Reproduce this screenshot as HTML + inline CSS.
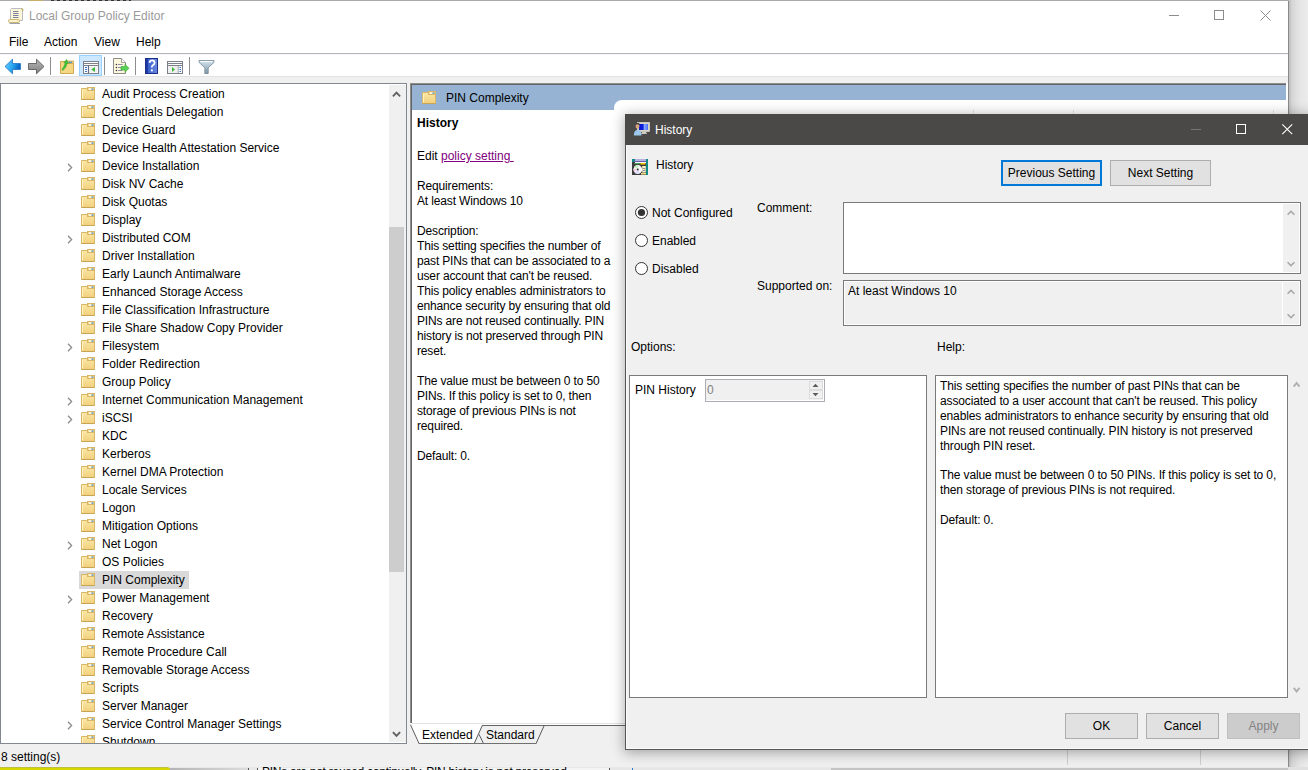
<!DOCTYPE html>
<html><head><meta charset="utf-8">
<style>
*{box-sizing:border-box;margin:0;padding:0}
html,body{width:1308px;height:770px;overflow:hidden;background:#f0f0f0;font-family:"Liberation Sans",sans-serif;font-size:12px;line-height:15px;color:#000}
.a{position:absolute}
.t{position:absolute;white-space:pre;font-size:12px;line-height:15px}
svg{position:absolute;overflow:visible}
.btn{position:absolute;background:#e1e1e1;border:1px solid #adadad;text-align:center;line-height:23px}
.chv{stroke:#606060;stroke-width:1.9;fill:none}
.chl{stroke:#a6a6a6;stroke-width:1.6;fill:none}
</style></head><body>
<svg width="0" height="0" style="position:absolute">
<defs>
<symbol id="fold" viewBox="0 0 14 13">
<linearGradient id="fg" x1="0" y1="0" x2="0" y2="1"><stop offset="0" stop-color="#fbe7a6"/><stop offset="1" stop-color="#f1d07c"/></linearGradient>
<path d="M0.5 1.5H6.2L7 3.5H13.5V12.5H0.5Z" fill="url(#fg)" stroke="#d9b566"/>
<rect x="6.5" y="0.5" width="7" height="3" fill="#f5dc94" stroke="#d9b566"/>
<rect x="8" y="1.5" width="2.5" height="1.2" fill="#fff"/><rect x="10.5" y="1.5" width="2" height="1.2" fill="#3b8de4"/>
<path d="M1.5 2.5V11.5" stroke="#fff3c2"/>
<path d="M0.5 12.5H13.5" stroke="#c9a455"/>
</symbol>
<symbol id="chev" viewBox="0 0 6 9"><path d="M1 0.8L4.6 4.5L1 8.2" stroke="#8c8c8c" stroke-width="1.3" fill="none"/></symbol>
</defs></svg>

<!-- behind strip top -->
<div class="a" style="left:0;top:0;width:1308px;height:1px;background:#a9a9a9"></div>
<div class="a" style="left:29px;top:0;width:14px;height:1px;background:#c9ad6a"></div>
<div class="a" style="left:51px;top:0;width:80px;height:1px;background:repeating-linear-gradient(to right,#333 0 3px,#999 3px 6px)"></div>

<!-- right shadow of main window -->
<div class="a" style="left:1288px;top:0;width:20px;height:770px;background:linear-gradient(to right,#b4b4b4,#d6d6d6 4px,#e6e6e6 12px,#ececec 20px)"></div>

<!-- main window -->
<div class="a" style="left:0;top:1px;width:1289px;height:766px;background:#fff;border-right:1px solid #8a8a8a"></div>

<!-- title bar -->
<div class="t" style="left:29px;top:9px;color:#9a9a9a">Local Group Policy Editor</div>
<div class="a" style="left:1169px;top:15px;width:10px;height:1px;background:#8c8c8c"></div>
<div class="a" style="left:1214px;top:10px;width:10px;height:10px;border:1px solid #8c8c8c"></div>
<svg style="left:1260px;top:10px" width="11" height="11"><path d="M0.5 0.5L10.5 10.5M10.5 0.5L0.5 10.5" stroke="#8c8c8c" stroke-width="1"/></svg>

<!-- menu -->
<div class="t" style="left:9px;top:35px">File</div>
<div class="t" style="left:44px;top:35px">Action</div>
<div class="t" style="left:94px;top:35px">View</div>
<div class="t" style="left:136px;top:35px">Help</div>
<div class="a" style="left:0;top:53px;width:1288px;height:1px;background:#b5b5b5"></div>
<div class="a" style="left:0;top:54px;width:1288px;height:1px;background:#f5f8fc"></div>

<!-- title icon -->
<svg style="left:7px;top:7px" width="17" height="17" viewBox="0 0 17 17">
<path d="M4.5 1.5H14.5L15.5 2.5V13.5H3.5V2.5Z" fill="#fcf6d8" stroke="#b9bcc8"/>
<path d="M14 1.5Q16.5 2 15.6 4" stroke="#b9a153" stroke-width="1.2" fill="none"/>
<path d="M6 4.5H11.5M6 6.5H11.5M6 8.5H11.5M6 10.5H11.5" stroke="#7c7f9c" stroke-width="1"/>
<rect x="1.5" y="12.5" width="11" height="3" rx="1.2" fill="#f6ebbb" stroke="#cdb673"/>
<path d="M3 14H10" stroke="#fffbe6"/>
<path d="M2.5 16.5H13" stroke="#9da0ae"/>
</svg>

<!-- toolbar icons -->
<svg style="left:0;top:54px" width="230" height="22" viewBox="0 54 230 22">
<defs>
<linearGradient id="gb" x1="0" y1="0" x2="1" y2="0.3"><stop offset="0" stop-color="#6ad2ff"/><stop offset="0.55" stop-color="#2aa8f2"/><stop offset="1" stop-color="#0565c4"/></linearGradient>
<linearGradient id="gg" x1="0" y1="0" x2="0" y2="1"><stop offset="0" stop-color="#b8b8b8"/><stop offset="1" stop-color="#7e7e7e"/></linearGradient>
<linearGradient id="gq" x1="0" y1="0" x2="1" y2="0"><stop offset="0" stop-color="#2f56c8"/><stop offset="1" stop-color="#6b8ae0"/></linearGradient>
<linearGradient id="gf" x1="0" y1="0" x2="0" y2="1"><stop offset="0" stop-color="#d8e6ef"/><stop offset="1" stop-color="#7d96a8"/></linearGradient>
</defs>
<path d="M5 66.5L12.5 59.2V63.5H20.5V69.5H12.5V73.8Z" fill="url(#gb)" stroke="#2c7cc6" stroke-width="0.9" stroke-linejoin="round"/>
<path d="M44 66.5L36.5 59.2V63.5H28.5V69.5H36.5V73.8Z" fill="url(#gg)" stroke="#5e5e5e" stroke-width="0.9" stroke-linejoin="round"/>
<rect x="50" y="57" width="1" height="18" fill="#8d8d8d"/>
<!-- folder up -->
<path d="M60.5 61.5H66L67 63.5H73.5V73.5H60.5Z" fill="#f5d784" stroke="#d0a850"/>
<rect x="66.5" y="61" width="7" height="2.5" fill="#f1d27c" stroke="#d0a850" stroke-width="0.8"/>
<rect x="69" y="61.7" width="3" height="1.2" fill="#3d8fe0"/>
<path d="M62 69.5Q64.5 66 65.5 62.5L63.8 63L66.5 59.5L68.8 63.5L67.2 63.2Q66.5 67.5 62.8 70.5Z" fill="#3fc63a" stroke="#2a9a26" stroke-width="0.5"/>
<!-- highlighted button -->
<rect x="79.5" y="55.5" width="22" height="20" fill="#cce8ff" stroke="#99d1ff"/>
<rect x="83.5" y="61.5" width="15" height="12" fill="#fff" stroke="#7b808b"/>
<path d="M84 63.5H98M84 65.5H98" stroke="#7b808b" stroke-width="1"/>
<rect x="92" y="62" width="1" height="1" fill="#fff"/><rect x="95" y="62" width="1" height="1" fill="#fff"/>
<path d="M88.5 66V73" stroke="#5d6a80" stroke-width="1.2"/>
<path d="M85 67.5H87M85 69.5H87M85 71.5H87" stroke="#3e74c4" stroke-width="1"/>
<rect x="89.5" y="66.5" width="8" height="6" fill="#f0f0f0"/>
<path d="M95 67L91.2 69.5L95 72Z" fill="#3cb83a"/>
<rect x="104" y="57" width="1" height="18" fill="#8d8d8d"/>
<!-- export list -->
<path d="M113.5 58.5H121.5L125.5 62.5V73.5H113.5Z" fill="#fdf7dc" stroke="#8c8c8c"/>
<path d="M121.5 58.5V62.5H125.5" fill="#fff" stroke="#8c8c8c" stroke-width="0.8"/>
<circle cx="116.4" cy="64.5" r="0.8" fill="#333"/><circle cx="116.4" cy="67.5" r="0.8" fill="#333"/><circle cx="116.4" cy="70.5" r="0.8" fill="#333"/>
<path d="M118 64.5H122.5M118 67.5H122.5M118 70.5H122.5" stroke="#8080a8" stroke-width="0.9"/>
<path d="M121 66.5H125V64.2L129 68.3L125 72.3V70H121Z" fill="#5ad255" stroke="#3aa536" stroke-width="0.6"/>
<rect x="135" y="57" width="1" height="18" fill="#8d8d8d"/>
<!-- help -->
<rect x="145" y="58" width="13" height="16" fill="url(#gq)"/>
<rect x="145" y="58" width="3" height="16" fill="#1e3ca4"/>
<rect x="145.5" y="58.5" width="12" height="15" fill="none" stroke="#1b2f8a" stroke-width="1"/>
<path d="M149.5 62.8Q149.8 60.3 152 60.3Q154.6 60.3 154.6 62.8Q154.6 64.4 152.8 65.3Q151.8 65.9 151.8 67.6" stroke="#fff" stroke-width="1.7" fill="none"/>
<rect x="150.9" y="69.4" width="1.9" height="1.9" fill="#fff"/>
<!-- action pane -->
<rect x="167.5" y="61.5" width="15" height="12" fill="#fff" stroke="#7b808b"/>
<path d="M168 63.5H182M168 65.5H182" stroke="#7b808b" stroke-width="1"/>
<path d="M178 66V73" stroke="#7b808b" stroke-width="1"/>
<rect x="168" y="66" width="9.5" height="7" fill="#efefef"/>
<path d="M179.5 67.5H181M179.5 69.5H181M179.5 71.5H181" stroke="#3e74c4" stroke-width="1"/>
<path d="M172 67L175 69.5L172 72Z" fill="#3cb83a"/>
<rect x="189" y="57" width="1" height="18" fill="#8d8d8d"/>
<!-- filter -->
<path d="M199 60.5H214V62.3L208.2 67.8V73.5H204.8V67.8L199 62.3Z" fill="url(#gf)" stroke="#6f8796" stroke-width="0.8" stroke-linejoin="round"/>
<path d="M200.5 61.5H212.5" stroke="#fff" stroke-width="0.9"/>
</svg>


<!-- toolbar strip -->
<div class="a" style="left:0;top:76px;width:1288px;height:7px;background:#f0f0f0;border-top:1px solid #e2e2e2"></div>

<!-- left panel -->
<div class="a" style="left:0;top:83px;width:407px;height:661px;border:1px solid #828790;background:#fff;overflow:hidden">
<svg style="left:80px;top:3px" width="14" height="13"><use href="#fold"/></svg>
<div class="t" style="left:101px;top:3px">Audit Process Creation</div>
<svg style="left:80px;top:21px" width="14" height="13"><use href="#fold"/></svg>
<div class="t" style="left:101px;top:21px">Credentials Delegation</div>
<svg style="left:80px;top:39px" width="14" height="13"><use href="#fold"/></svg>
<div class="t" style="left:101px;top:39px">Device Guard</div>
<svg style="left:80px;top:57px" width="14" height="13"><use href="#fold"/></svg>
<div class="t" style="left:101px;top:57px">Device Health Attestation Service</div>
<svg style="left:66px;top:79px" width="6" height="9"><use href="#chev"/></svg>
<svg style="left:80px;top:75px" width="14" height="13"><use href="#fold"/></svg>
<div class="t" style="left:101px;top:75px">Device Installation</div>
<svg style="left:80px;top:93px" width="14" height="13"><use href="#fold"/></svg>
<div class="t" style="left:101px;top:93px">Disk NV Cache</div>
<svg style="left:80px;top:111px" width="14" height="13"><use href="#fold"/></svg>
<div class="t" style="left:101px;top:111px">Disk Quotas</div>
<svg style="left:80px;top:129px" width="14" height="13"><use href="#fold"/></svg>
<div class="t" style="left:101px;top:129px">Display</div>
<svg style="left:66px;top:151px" width="6" height="9"><use href="#chev"/></svg>
<svg style="left:80px;top:147px" width="14" height="13"><use href="#fold"/></svg>
<div class="t" style="left:101px;top:147px">Distributed COM</div>
<svg style="left:80px;top:165px" width="14" height="13"><use href="#fold"/></svg>
<div class="t" style="left:101px;top:165px">Driver Installation</div>
<svg style="left:80px;top:183px" width="14" height="13"><use href="#fold"/></svg>
<div class="t" style="left:101px;top:183px">Early Launch Antimalware</div>
<svg style="left:80px;top:201px" width="14" height="13"><use href="#fold"/></svg>
<div class="t" style="left:101px;top:201px">Enhanced Storage Access</div>
<svg style="left:80px;top:219px" width="14" height="13"><use href="#fold"/></svg>
<div class="t" style="left:101px;top:219px">File Classification Infrastructure</div>
<svg style="left:80px;top:237px" width="14" height="13"><use href="#fold"/></svg>
<div class="t" style="left:101px;top:237px">File Share Shadow Copy Provider</div>
<svg style="left:66px;top:259px" width="6" height="9"><use href="#chev"/></svg>
<svg style="left:80px;top:255px" width="14" height="13"><use href="#fold"/></svg>
<div class="t" style="left:101px;top:255px">Filesystem</div>
<svg style="left:80px;top:273px" width="14" height="13"><use href="#fold"/></svg>
<div class="t" style="left:101px;top:273px">Folder Redirection</div>
<svg style="left:80px;top:291px" width="14" height="13"><use href="#fold"/></svg>
<div class="t" style="left:101px;top:291px">Group Policy</div>
<svg style="left:66px;top:313px" width="6" height="9"><use href="#chev"/></svg>
<svg style="left:80px;top:309px" width="14" height="13"><use href="#fold"/></svg>
<div class="t" style="left:101px;top:309px">Internet Communication Management</div>
<svg style="left:66px;top:331px" width="6" height="9"><use href="#chev"/></svg>
<svg style="left:80px;top:327px" width="14" height="13"><use href="#fold"/></svg>
<div class="t" style="left:101px;top:327px">iSCSI</div>
<svg style="left:80px;top:345px" width="14" height="13"><use href="#fold"/></svg>
<div class="t" style="left:101px;top:345px">KDC</div>
<svg style="left:80px;top:363px" width="14" height="13"><use href="#fold"/></svg>
<div class="t" style="left:101px;top:363px">Kerberos</div>
<svg style="left:80px;top:381px" width="14" height="13"><use href="#fold"/></svg>
<div class="t" style="left:101px;top:381px">Kernel DMA Protection</div>
<svg style="left:80px;top:399px" width="14" height="13"><use href="#fold"/></svg>
<div class="t" style="left:101px;top:399px">Locale Services</div>
<svg style="left:80px;top:417px" width="14" height="13"><use href="#fold"/></svg>
<div class="t" style="left:101px;top:417px">Logon</div>
<svg style="left:80px;top:435px" width="14" height="13"><use href="#fold"/></svg>
<div class="t" style="left:101px;top:435px">Mitigation Options</div>
<svg style="left:66px;top:457px" width="6" height="9"><use href="#chev"/></svg>
<svg style="left:80px;top:453px" width="14" height="13"><use href="#fold"/></svg>
<div class="t" style="left:101px;top:453px">Net Logon</div>
<svg style="left:80px;top:471px" width="14" height="13"><use href="#fold"/></svg>
<div class="t" style="left:101px;top:471px">OS Policies</div>
<div class="a" style="left:78px;top:487px;width:110px;height:18px;background:#d9d9d9"></div>
<svg style="left:80px;top:489px" width="14" height="13"><use href="#fold"/></svg>
<div class="t" style="left:101px;top:489px">PIN Complexity</div>
<svg style="left:66px;top:511px" width="6" height="9"><use href="#chev"/></svg>
<svg style="left:80px;top:507px" width="14" height="13"><use href="#fold"/></svg>
<div class="t" style="left:101px;top:507px">Power Management</div>
<svg style="left:80px;top:525px" width="14" height="13"><use href="#fold"/></svg>
<div class="t" style="left:101px;top:525px">Recovery</div>
<svg style="left:80px;top:543px" width="14" height="13"><use href="#fold"/></svg>
<div class="t" style="left:101px;top:543px">Remote Assistance</div>
<svg style="left:80px;top:561px" width="14" height="13"><use href="#fold"/></svg>
<div class="t" style="left:101px;top:561px">Remote Procedure Call</div>
<svg style="left:80px;top:579px" width="14" height="13"><use href="#fold"/></svg>
<div class="t" style="left:101px;top:579px">Removable Storage Access</div>
<svg style="left:80px;top:597px" width="14" height="13"><use href="#fold"/></svg>
<div class="t" style="left:101px;top:597px">Scripts</div>
<svg style="left:80px;top:615px" width="14" height="13"><use href="#fold"/></svg>
<div class="t" style="left:101px;top:615px">Server Manager</div>
<svg style="left:66px;top:637px" width="6" height="9"><use href="#chev"/></svg>
<svg style="left:80px;top:633px" width="14" height="13"><use href="#fold"/></svg>
<div class="t" style="left:101px;top:633px">Service Control Manager Settings</div>
<svg style="left:80px;top:651px" width="14" height="13"><use href="#fold"/></svg>
<div class="t" style="left:101px;top:651px">Shutdown</div>
<div class="a" style="left:388px;top:1px;width:17px;height:657px;background:#f0f0f0"></div>
<div class="a" style="left:388px;top:143px;width:15px;height:345px;background:#cdcdcd"></div>
<svg style="left:391px;top:7px" width="9" height="6"><path d="M0.9 5.3L4.5 1.6L8.1 5.3" class="chv"/></svg>
<svg style="left:391px;top:647px" width="9" height="6"><path d="M0.9 1.2L4.5 4.9L8.1 1.2" class="chv"/></svg>
</div>
<div class="a" style="left:407px;top:83px;width:3px;height:661px;background:#f0f0f0"></div>

<!-- right pane -->
<div class="a" style="left:410px;top:83px;width:876px;height:640px;background:#fff;border-left:1px solid #8e8e8e;border-top:1px solid #8e8e8e;box-shadow:inset 1px 1px 0 #646464"></div>
<div class="a" style="left:412px;top:85px;width:874px;height:25px;background:#96b3d3"></div>
<svg style="left:422px;top:91px" width="14" height="13"><use href="#fold"/></svg>
<div class="t" style="left:446px;top:91px">PIN Complexity</div>
<div class="t" style="left:417px;top:116px;font-weight:bold">History</div>
<div class="t" style="left:417px;top:149px">Edit <span style="color:#800080;text-decoration:underline">policy setting </span></div>
<div class="t" style="left:417px;top:179px;letter-spacing:-0.15px">Requirements:
At least Windows 10

Description:
This setting specifies the number of
past PINs that can be associated to a
user account that can't be reused.
This policy enables administrators to
enhance security by ensuring that old
PINs are not reused continually. PIN
history is not preserved through PIN
reset.

The value must be between 0 to 50
PINs. If this policy is set to 0, then
storage of previous PINs is not
required.

Default: 0.</div>
<div class="a" style="left:412px;top:723px;width:874px;height:1px;background:#e3e3e3"></div>
<svg style="left:410px;top:724px" width="876" height="21">
<rect x="0" y="0" width="876" height="20" fill="#f0f0f0"/>
<rect x="2" y="0" width="874" height="1" fill="#fff"/>
<path d="M0 0.5L8.5 19.5H64.3L72.3 0.5Z" fill="#fff"/>
<path d="M0.5 0.8L8.8 19" stroke="#5a5a5a" stroke-width="1" fill="none"/>
<path d="M72 1.5H876" stroke="#646464" stroke-width="1"/>
<path d="M72.3 1.5L64.3 19.3M134.2 1.5L126.2 19.3M69 10.3L73.4 19.3" stroke="#5a5a5a" stroke-width="1" fill="none"/>
<path d="M8.5 19.5H126.5" stroke="#707070" stroke-width="1"/>
<path d="M2 20.5H876" stroke="#d4d4d4" stroke-width="1"/>
</svg>
<div class="t" style="left:422px;top:728px">Extended</div>
<div class="t" style="left:486px;top:728px">Standard</div>


<!-- status bar -->
<div class="a" style="left:0;top:744px;width:1288px;height:23px;background:#f0f0f0"></div>
<div class="t" style="left:1px;top:750px">8 setting(s)</div>
<div class="a" style="left:1067px;top:746px;width:1px;height:19px;background:#cfcfcf"></div>
<div class="a" style="left:1200px;top:746px;width:1px;height:19px;background:#cfcfcf"></div>

<!-- bottom strip -->
<div class="a" style="left:0;top:767px;width:1308px;height:3px;background:#c4c4c4;overflow:hidden">
<div class="a" style="left:0;top:0;width:1308px;height:1px;background:#e8e8e8"></div>
<div class="a" style="left:0;top:0;width:170px;height:3px;background:#d6d600;border-top:1px solid #c0c040;border-radius:0 3px 0 0"></div>
<div class="a" style="left:170px;top:1px;width:78px;height:2px;background:linear-gradient(to right,#b4b4b4,#dcdcdc)"></div>
<div class="a" style="left:248px;top:1px;width:1px;height:2px;background:#555"></div>
<div class="a" style="left:249px;top:1px;width:8px;height:2px;background:#e8e8e8"></div>
<div class="a" style="left:257px;top:1px;width:1px;height:2px;background:#555"></div>
<div class="a" style="left:258px;top:1px;width:351px;height:2px;background:#f4f4f4"></div>
<div class="a" style="left:609px;top:1px;width:1px;height:2px;background:#555"></div>
<div class="a" style="left:610px;top:1px;width:221px;height:2px;background:#e6e6e6"></div>
<div class="a" style="left:632px;top:1px;width:1px;height:2px;background:#2a7ad0"></div>
<div class="a" style="left:1288px;top:0;width:20px;height:3px;background:#e0e0e0"></div>
<div class="t" style="left:262px;top:-2px;letter-spacing:-0.25px">PINs are not reused continually. PIN history is not preserved</div>
</div>

<!-- dialog shadow -->
<div class="a" style="left:614px;top:100px;width:672px;height:30px;border-radius:8px 0 0 0;background:#fff"></div>
<div class="a" style="left:625px;top:114px;width:690px;height:636px;box-shadow:0 2px 12px 1px rgba(0,0,0,0.32)"></div>
<div class="a" style="left:973px;top:110px;width:1px;height:4px;background:#cfcfcf"></div>
<div class="a" style="left:1073px;top:110px;width:1px;height:4px;background:#cfcfcf"></div>
<div class="a" style="left:1273px;top:110px;width:1px;height:4px;background:#cfcfcf"></div>
<!-- dialog -->
<div class="a" style="left:625px;top:114px;width:690px;height:636px;background:#f0f0f0;border:1px solid #555;box-shadow:inset 1px -1px 0 #fbfbfb"></div>
<div class="a" style="left:625px;top:114px;width:690px;height:31px;background:#4a4947"></div>
<div class="t" style="left:655px;top:123px;color:#fff">History</div>
<div class="a" style="left:1191px;top:129px;width:10px;height:1px;background:#767574"></div>
<div class="a" style="left:1236px;top:124px;width:10px;height:10px;border:1px solid #fff"></div>
<svg style="left:1282px;top:124px" width="11" height="11"><path d="M0.3 0.3L10.2 10.2M10.2 0.3L0.3 10.2" stroke="#fff" stroke-width="1.1"/></svg>

<svg style="left:633px;top:120px" width="18" height="18" viewBox="0 0 18 18">
<defs><linearGradient id="scr" x1="0" y1="0" x2="1" y2="0"><stop offset="0" stop-color="#0a10c8"/><stop offset="0.45" stop-color="#0a20e0"/><stop offset="0.6" stop-color="#8aa8ff"/><stop offset="1" stop-color="#4868ff"/></linearGradient></defs>
<rect x="4.5" y="2.5" width="12" height="9" fill="#d8d4c8" stroke="#f0ece0" stroke-width="0.6"/>
<rect x="6" y="4" width="9" height="6" fill="url(#scr)"/>
<path d="M9 12H13L14 14H8Z" fill="#cfcbc0"/>
<ellipse cx="4.5" cy="6" rx="2" ry="2.6" fill="#d9a77a"/>
<path d="M2.5 4.5Q4.5 2.5 6.5 4.5" stroke="#444" stroke-width="1.2" fill="none"/>
<path d="M0.8 15.5Q1 10 4.5 10Q8.5 10 8.5 15.5Z" fill="#9cc8ec"/>
</svg>
<svg style="left:631px;top:158px" width="18" height="18" viewBox="0 0 18 18">
<rect x="1" y="1" width="16" height="16" fill="#3c3c3c"/>
<rect x="1" y="1" width="3" height="3" fill="#0f8a84"/><rect x="15" y="1" width="2" height="16" fill="#0f8a84"/>
<rect x="4" y="1" width="11" height="2" fill="#b8b2e0"/>
<rect x="3" y="3" width="12" height="1" fill="#6a62a8"/>
<rect x="4" y="4" width="11" height="1" fill="#f4f4ff"/>
<rect x="3.5" y="5" width="6" height="1.2" fill="#4a9a5a"/><rect x="9.5" y="5" width="5" height="1.6" fill="#f7c400"/>
<circle cx="6.8" cy="11.5" r="4.4" fill="#f6f6f6"/>
<path d="M6.8 11.5L3.2 8.8A4.4 4.4 0 0 1 6.8 7.1Z" fill="#c4f2bc"/><path d="M6.8 11.5L4 15A4.4 4.4 0 0 0 8.5 15.6Z" fill="#dcdcff"/><path d="M6.8 11.5L2.6 10.8A4.4 4.4 0 0 0 3.2 13.8Z" fill="#f4c8e6"/>
<circle cx="6.8" cy="11.5" r="1" fill="#333"/>
<rect x="11.2" y="8" width="3.6" height="6.5" fill="#fdf3c0"/>
<path d="M11.8 10.5H14.2M11.8 12.5H14.2" stroke="#7a7aa0" stroke-width="0.9"/>
<rect x="10" y="15" width="5" height="1.5" fill="#f3dd8a"/>
</svg>
<div class="t" style="left:656px;top:158px">History</div>
<div class="btn" style="left:1001px;top:160px;width:101px;height:26px;border:2px solid #0078d7;line-height:22px">Previous Setting</div>
<div class="btn" style="left:1110px;top:160px;width:101px;height:26px;line-height:24px">Next Setting</div>

<svg style="left:635px;top:206px" width="13" height="13"><circle cx="6.5" cy="6.5" r="6" fill="#fff" stroke="#333"/><circle cx="6.5" cy="6.5" r="3.6" fill="#333"/></svg>
<svg style="left:635px;top:234px" width="13" height="13"><circle cx="6.5" cy="6.5" r="6" fill="#fff" stroke="#333"/></svg>
<svg style="left:635px;top:262px" width="13" height="13"><circle cx="6.5" cy="6.5" r="6" fill="#fff" stroke="#333"/></svg>
<div class="t" style="left:652px;top:206px">Not Configured</div>
<div class="t" style="left:652px;top:234px">Enabled</div>
<div class="t" style="left:652px;top:262px">Disabled</div>

<div class="t" style="left:757px;top:201px">Comment:</div>
<div class="a" style="left:843px;top:202px;width:458px;height:72px;background:#fff;border:1px solid #7a7a7a"></div>
<div class="a" style="left:1283px;top:204px;width:16px;height:68px;background:#f0f0f0"></div>
<svg style="left:1287px;top:210px" width="8" height="6"><path d="M0.6 4.8L4 1.3L7.4 4.8" class="chl"/></svg>
<svg style="left:1287px;top:261px" width="8" height="6"><path d="M0.6 1.2L4 4.7L7.4 1.2" class="chl"/></svg>

<div class="t" style="left:757px;top:279px">Supported on:</div>
<div class="a" style="left:843px;top:280px;width:458px;height:46px;background:#f0f0f0;border:1px solid #7a7a7a;box-shadow:inset 0 0 0 1px #fff"></div>
<div class="a" style="left:1282px;top:281px;width:1px;height:44px;background:#fff"></div>
<svg style="left:1287px;top:289px" width="8" height="6"><path d="M0.6 4.8L4 1.3L7.4 4.8" class="chl"/></svg>
<svg style="left:1287px;top:313px" width="8" height="6"><path d="M0.6 1.2L4 4.7L7.4 1.2" class="chl"/></svg>
<div class="t" style="left:848px;top:284px">At least Windows 10</div>

<div class="t" style="left:631px;top:340px">Options:</div>
<div class="t" style="left:937px;top:340px">Help:</div>
<div class="a" style="left:629px;top:375px;width:298px;height:323px;background:#fff;border:1px solid #7a7a7a"></div>
<div class="t" style="left:635px;top:383px">PIN History</div>
<div class="a" style="left:705px;top:379px;width:120px;height:23px;background:#f0f0f0;border:1px solid #abadb3;box-shadow:inset -1px -1px 0 #fff"></div>
<div class="t" style="left:707px;top:383px;color:#838383">0</div>
<div class="a" style="left:809px;top:381px;width:14px;height:9px;background:#f0f0f0;border:1px solid #dcdcdc"></div>
<div class="a" style="left:809px;top:390px;width:14px;height:9px;background:#f0f0f0;border:1px solid #dcdcdc"></div>
<svg style="left:812px;top:383px" width="8" height="15"><path d="M0.5 4H6.5L3.5 0.8Z" fill="#5a5a5a"/><path d="M0.5 10H6.5L3.5 13.2Z" fill="#5a5a5a"/></svg>
<div class="a" style="left:935px;top:375px;width:353px;height:323px;background:#fff;border:1px solid #7a7a7a"></div>
<div class="t" style="left:940px;top:379px;letter-spacing:-0.12px;line-height:14.88px">This setting specifies the number of past PINs that can be
associated to a user account that can't be reused. This policy
enables administrators to enhance security by ensuring that old
PINs are not reused continually. PIN history is not preserved
through PIN reset.

The value must be between 0 to 50 PINs. If this policy is set to 0,
then storage of previous PINs is not required.

Default: 0.</div>
<svg style="left:1293px;top:381px" width="8" height="7"><path d="M0.7 5.6L3.6 2L6.5 5.6" class="chl" style="stroke-width:1.9;stroke:#b0b0b0"/></svg>
<svg style="left:1293px;top:687px" width="8" height="7"><path d="M0.7 0.8L3.6 4.4L6.5 0.8" class="chl" style="stroke-width:1.9;stroke:#b0b0b0"/></svg>

<div class="btn" style="left:1065px;top:713px;width:73px;height:26px;line-height:24px">OK</div>
<div class="btn" style="left:1146px;top:713px;width:73px;height:26px;line-height:24px">Cancel</div>
<div class="btn" style="left:1227px;top:713px;width:73px;height:26px;line-height:24px;background:#ccc;border-color:#bfbfbf;color:#838383">Apply</div>


</body></html>
